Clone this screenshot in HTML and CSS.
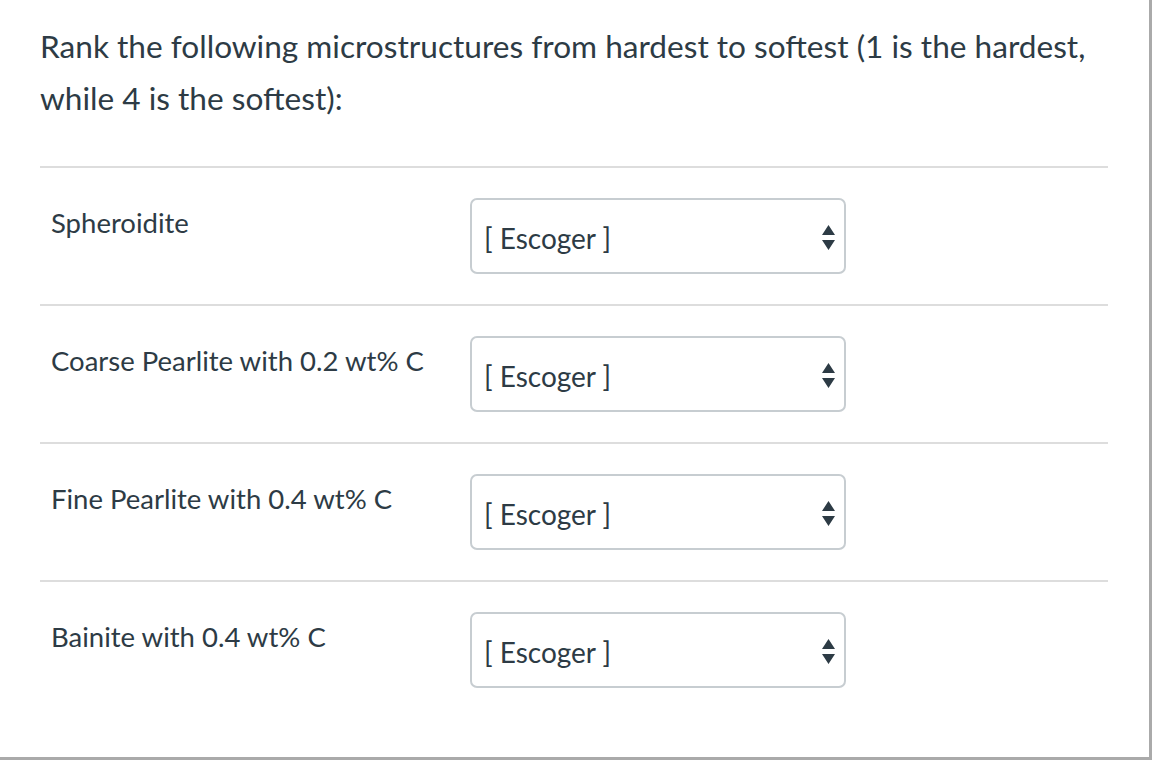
FILE: index.html
```html
<!DOCTYPE html>
<html>
<head>
<meta charset="utf-8">
<link rel="stylesheet" href="styles.css">
</head>
<body>
<div class="page">
  <p class="question">Rank the following microstructures from hardest to softest (1 is the hardest, while 4 is the softest):</p>
  <div class="rows">
    <div class="row">
      <div class="label">Spheroidite</div>
      <div class="select"><span class="value">[ Escoger ]</span>
        <svg class="arrows" width="13" height="26" viewBox="0 0 13 26"><path d="M6.5 0 L13 10 L0 10 Z M0 15 L13 15 L6.5 25 Z" fill="#2d3b45"/></svg>
      </div>
    </div>
    <div class="row">
      <div class="label">Coarse Pearlite with 0.2 wt% C</div>
      <div class="select"><span class="value">[ Escoger ]</span>
        <svg class="arrows" width="13" height="26" viewBox="0 0 13 26"><path d="M6.5 0 L13 10 L0 10 Z M0 15 L13 15 L6.5 25 Z" fill="#2d3b45"/></svg>
      </div>
    </div>
    <div class="row">
      <div class="label">Fine Pearlite with 0.4 wt% C</div>
      <div class="select"><span class="value">[ Escoger ]</span>
        <svg class="arrows" width="13" height="26" viewBox="0 0 13 26"><path d="M6.5 0 L13 10 L0 10 Z M0 15 L13 15 L6.5 25 Z" fill="#2d3b45"/></svg>
      </div>
    </div>
    <div class="row">
      <div class="label">Bainite with 0.4 wt% C</div>
      <div class="select"><span class="value">[ Escoger ]</span>
        <svg class="arrows" width="13" height="26" viewBox="0 0 13 26"><path d="M6.5 0 L13 10 L0 10 Z M0 15 L13 15 L6.5 25 Z" fill="#2d3b45"/></svg>
      </div>
    </div>
  </div>
</div>
</body>
</html>
```

FILE: styles.css
```css
html, body {
  margin: 0;
  padding: 0;
  background: #fff;
}
body {
  font-family: Lato, "Liberation Sans", sans-serif;
  color: #2d3b45;
}
.page {
  box-sizing: border-box;
  width: 1152px;
  height: 760px;
  padding: 20px 40px 0 40px;
  border-right: 3px solid #aaaaaa;
  border-bottom: 3px solid #aaaaaa;
}
.question {
  margin: 0;
  height: 146px;
  font-size: 31.6px;
  line-height: 52px;
}
.rows {
  width: 1068px;
}
.row {
  display: flex;
  align-items: flex-start;
  border-top: 2px solid #dddddd;
  padding: 30px 10px 30px 11px;
}
.label {
  width: 419px;
  font-size: 27.5px;
  line-height: 40px;
  padding-top: 5px;
}
.select {
  box-sizing: border-box;
  width: 376px;
  height: 76px;
  border: 2px solid #c7cdd1;
  border-radius: 7px;
  display: flex;
  align-items: center;
  justify-content: space-between;
  padding: 3px 9px 0 12px;
}
.value {
  font-size: 28px;
}
.arrows {
  display: block;
}
```
